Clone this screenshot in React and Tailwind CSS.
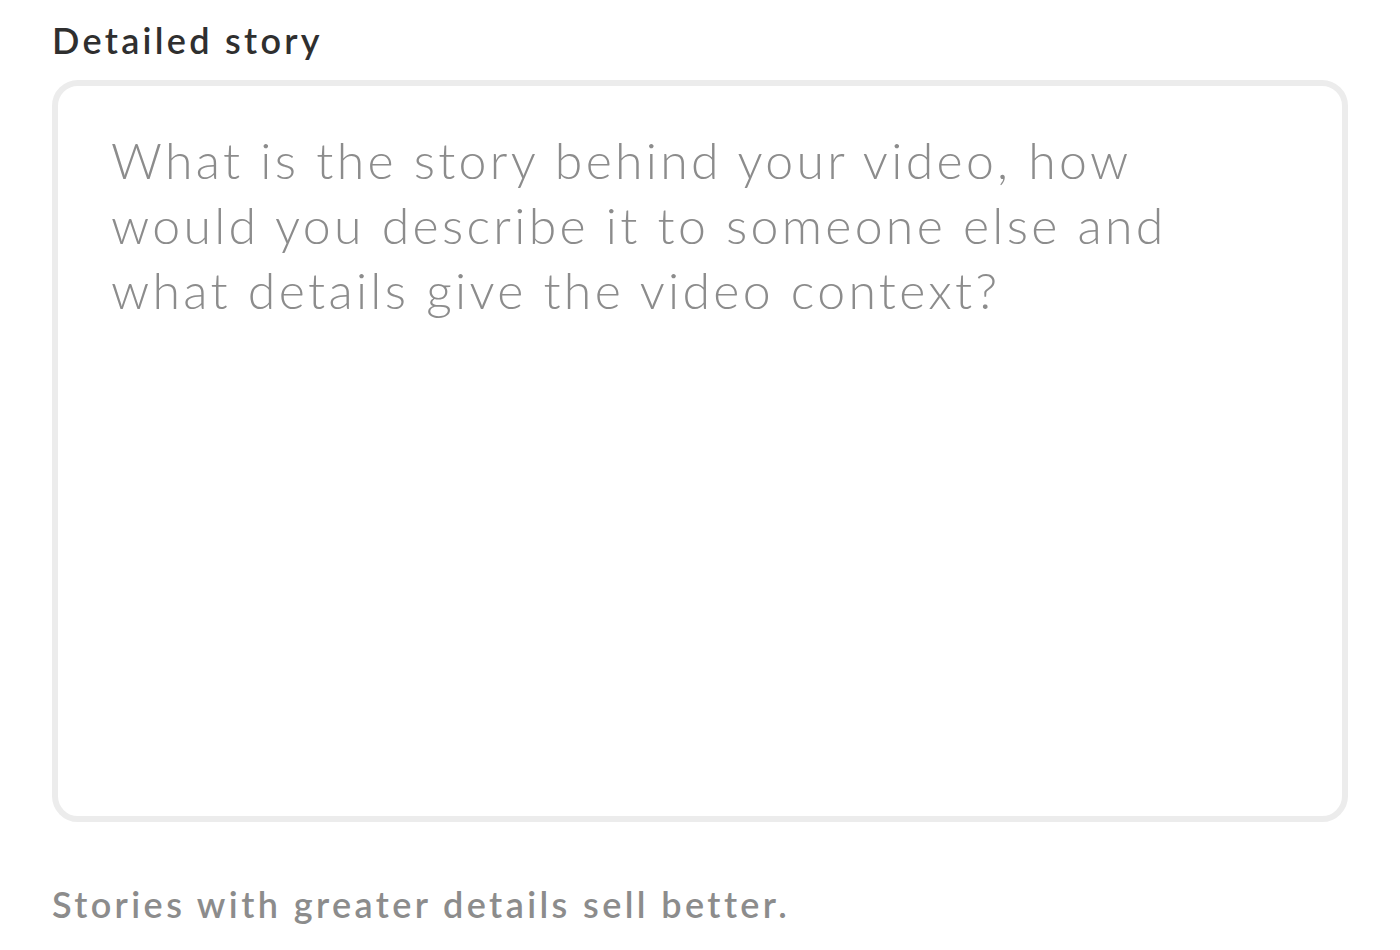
export default function App() {
  return (
    <div
      className="w-[1400px] h-[950px] bg-white px-[52px] pt-[17px]"
      style={{ fontFamily: "Lato, 'Open Sans', sans-serif" }}
    >
      <label className="block text-[36px] leading-[46px] font-semibold text-[#2f2f2f] tracking-[3.3px]">
        Detailed story
      </label>
      <textarea
        className="mt-[17px] block w-[1296px] h-[742px] resize-none rounded-[26px] border-[6px] border-[#ececec] bg-white pl-[53px] pr-[40px] pt-[42px] text-[50px] leading-[65px] font-light text-[#8c8c8c] tracking-[3.3px] outline-none placeholder:text-[#8c8c8c]"
        placeholder={
          "What is the story behind your video, how\nwould you describe it to someone else and\nwhat details give the video context?"
        }
      />
      <p className="mt-[59px] text-[36px] leading-[46px] font-semibold text-[#8c8c8c] tracking-[3.4px]">
        Stories with greater details sell better.
      </p>
    </div>
  );
}
